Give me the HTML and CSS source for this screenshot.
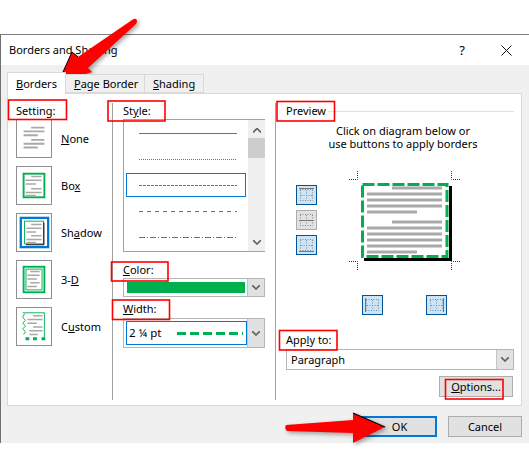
FILE: index.html
```html
<!DOCTYPE html>
<html lang="en">
<head>
<meta charset="utf-8">
<title>Borders and Shading</title>
<link rel="stylesheet" href="styles.css">
</head>
<body>
<svg class="defs" width="0" height="0" aria-hidden="true">
  <defs>
    <g id="bars">
      <path d="M15 8h14M7 12h22M7 16h15M15 21h14M7 25h22M7 29h15" stroke="#a9a9a9" stroke-width="2" fill="none"/>
    </g>
    <g id="grid">
      <path d="M4 4.500h13M4 15.500h13M4.500 5v10M16.500 5v10M10.500 5v10M5 10.500h11" stroke="#8a8a8a" stroke-width="1" stroke-dasharray="1 1.500" fill="none"/>
    </g>
    <polyline id="chev" points="0,0 4,4 8,0" fill="none" stroke="#606060" stroke-width="1.6"/>
  </defs>
</svg>
<div class="dialog">
  <header class="titlebar">
    <span class="title">Borders and Shading</span>
    <span class="help">?</span>
    <svg class="close" width="11" height="11" viewBox="0 0 11 11"><path d="M0.500 0.500l10 10M10.500 0.500l-10 10" stroke="#111" stroke-width="1" fill="none"/></svg>
  </header>
  <div class="content">
    <nav class="tabs">
      <span class="tab active"><u>B</u>orders</span>
      <span class="tab"><u>P</u>age Border</span>
      <span class="tab"><u>S</u>hading</span>
    </nav>
    <section class="panel">
      <div class="col settings">
        <div class="legend">Setting:</div>
        <ul class="setting-list">
          <li class="setting">
            <svg class="setting-icon" width="36" height="39" viewBox="0 0 36 39"><use href="#bars"/></svg>
            <span><u>N</u>one</span>
          </li>
          <li class="setting">
            <svg class="setting-icon" width="36" height="39" viewBox="0 0 36 39"><rect x="7" y="7" width="22" height="25" fill="none" stroke="#00b050" stroke-width="2"/><path d="M15 10h11M9 14h17M9 18h11M15 23h11M9 27h17M9 30h11" stroke="#a9a9a9" stroke-width="1.6"/></svg>
            <span>Bo<u>x</u></span>
          </li>
          <li class="setting">
            <svg class="setting-icon" width="36" height="39" viewBox="0 0 36 39"><rect x="4" y="4" width="29" height="31" fill="none" stroke="#0078d7" stroke-width="2.4"/><rect x="8" y="7.500" width="20" height="24" fill="none" stroke="#00b050" stroke-width="1"/><path d="M28.500 9v23.500H9.500" fill="none" stroke="#000" stroke-width="1"/><path d="M15 11h11M10 15h16M10 19h10M15 23h11M10 27h16M10 30h10" stroke="#a9a9a9" stroke-width="1.6"/></svg>
            <span>Sh<u>a</u>dow</span>
          </li>
          <li class="setting">
            <svg class="setting-icon" width="36" height="39" viewBox="0 0 36 39"><rect x="7" y="6" width="22" height="27" fill="none" stroke="#00b050" stroke-width="2"/><rect x="9.500" y="8.500" width="17" height="22" fill="none" stroke="#00b050" stroke-width="1"/><path d="M14 11h10M11 15h13M11 19h10M14 23h10M11 27h10" stroke="#a9a9a9" stroke-width="1.6"/></svg>
            <span>3-<u>D</u></span>
          </li>
          <li class="setting">
            <svg class="setting-icon" width="36" height="39" viewBox="0 0 36 39"><path d="M6 5h23v26M8 6l-2 4 3 3-3 3 3 3-3 3 3 3-2 3" fill="none" stroke="#00b050" stroke-width="1"/><path d="M9 31h4v3H9zM17 31h4v3h-4zM26 31h4v3h-4z" fill="#00b050"/><path d="M17 8h10M11 12h16M11 16h10M17 20h10M13 24h14M13 28h9" stroke="#a9a9a9" stroke-width="1.6"/></svg>
            <span>C<u>u</u>stom</span>
          </li>
        </ul>
      </div>
      <div class="col styles">
        <div class="legend"><span>St<u>y</u>le:</span></div>
        <div class="listbox">
          <div class="options">
            <div class="option"><i class="ln solid"></i></div>
            <div class="option"><i class="ln dotted"></i></div>
            <div class="option selected"><i class="ln dash-s"></i></div>
            <div class="option"><i class="ln dash-l"></i></div>
            <div class="option"><i class="ln dash-dot"></i></div>
          </div>
          <div class="scrollbar">
            <svg width="8" height="5" viewBox="0 0 8 5"><use href="#chev" transform="translate(0 4.500) scale(1 -1)"/></svg>
            <div class="thumb"></div>
            <svg class="chev-down" width="8" height="5" viewBox="0 0 8 5"><use href="#chev"/></svg>
          </div>
        </div>
        <label class="field-label"><u>C</u>olor:</label>
        <div class="combo color-combo">
          <div class="swatch"></div>
          <div class="combo-btn"><svg width="8" height="5" viewBox="0 0 8 5"><use href="#chev"/></svg></div>
        </div>
        <label class="field-label width-label"><u>W</u>idth:</label>
        <div class="combo width-combo">
          <div class="width-value"><span>2 ¼ pt</span><i class="thick"></i></div>
          <div class="combo-btn"><svg width="8" height="5" viewBox="0 0 8 5"><use href="#chev"/></svg></div>
        </div>
      </div>
      <div class="col preview">
        <div class="legend preview-legend"><span>Preview</span><i class="rule"></i></div>
        <p class="hint">Click on diagram below or<br>use buttons to apply borders</p>
        <div class="stage">
          <div class="side-buttons">
            <svg class="bbtn" width="21" height="20" viewBox="0 0 21 20"><rect x="0.500" y="0.500" width="20" height="19" fill="#cce4f7" stroke="#005499"/><use href="#grid"/><path d="M3 3.500h15" stroke="#777"/></svg>
            <svg class="bbtn" width="21" height="20" viewBox="0 0 21 20"><rect x="0.500" y="0.500" width="20" height="19" fill="#e1e1e1" stroke="#adadad"/><use href="#grid"/><path d="M3 10.500h15" stroke="#777"/></svg>
            <svg class="bbtn" width="21" height="20" viewBox="0 0 21 20"><rect x="0.500" y="0.500" width="20" height="19" fill="#cce4f7" stroke="#005499"/><use href="#grid"/><path d="M3 16.500h15" stroke="#777"/></svg>
          </div>
          <svg class="diagram" width="111" height="100" viewBox="0 0 111 100">
            <path d="M8.500 1v8.500H0M102.500 1v8.500H111M0 91.500h8.500V100M111 91.500h-8.500V100" fill="none" stroke="#333" stroke-dasharray="1 1"/>
            <path d="M15 89.500h86.500V16" fill="none" stroke="#000" stroke-width="3"/>
            <rect x="12" y="13" width="87" height="75" fill="#fff"/>
            <path d="M43 18h50M18 24h75M18 30h75M18 36h75M18 42h50M43 52h50M18 58h75M18 64h75M18 70h75M18 76h75M18 82h50" stroke="#a9a9a9" stroke-width="3"/>
            <rect x="13.500" y="14.500" width="84.500" height="72" fill="none" stroke="#00b050" stroke-width="3" stroke-dasharray="12 3"/>
          </svg>
        </div>
        <div class="bottom-buttons">
          <svg class="bbtn" width="21" height="20" viewBox="0 0 21 20"><rect x="0.500" y="0.500" width="20" height="19" fill="#cce4f7" stroke="#005499"/><use href="#grid"/><path d="M3.500 3v14" stroke="#777"/></svg>
          <svg class="bbtn" width="21" height="20" viewBox="0 0 21 20"><rect x="0.500" y="0.500" width="20" height="19" fill="#cce4f7" stroke="#005499"/><use href="#grid"/><path d="M17.500 3v14" stroke="#777"/></svg>
        </div>
        <label class="field-label apply-label">App<u>l</u>y to:</label>
        <div class="combo apply-combo">
          <div class="apply-value">Paragraph</div>
          <div class="combo-btn"><svg width="8" height="5" viewBox="0 0 8 5"><use href="#chev"/></svg></div>
        </div>
        <div class="options-row"><button class="btn options-btn" type="button"><u>O</u>ptions...</button></div>
      </div>
    </section>
    <footer class="footer">
      <button class="btn ok" type="button">OK</button>
      <button class="btn" type="button">Cancel</button>
    </footer>
  </div>
</div>
<svg class="annotations" width="529" height="455" viewBox="0 0 529 455" aria-hidden="true">
  <g fill="none" stroke="#f00" stroke-width="1.600">
    <rect x="8.500" y="100" width="58" height="19.500"/>
    <rect x="108" y="101" width="57" height="20"/>
    <rect x="111.500" y="262" width="56.500" height="19"/>
    <rect x="112.500" y="300" width="57" height="19.500"/>
    <rect x="277" y="101.500" width="57.500" height="19.500"/>
    <rect x="279.500" y="330.500" width="57.500" height="19.500"/>
    <rect x="445.500" y="379.500" width="57.500" height="19.500"/>
  </g>
  <g class="arrow">
    <path d="M136 19q2 2 0 5L88 68 92 72 58 83 72 52 78 57 132 20q3-2 4-1z" fill="#f00"/>
    <path d="M72 52 58 83M78 57 72 52" stroke="#000" stroke-width="1" fill="none"/>
  </g>
  <g class="arrow">
    <path d="M286 425 353 420 353 413 385 427 353 443 353 433 287 431q-3-3-1-6z" fill="#f00"/>
    <path d="M353 413 385 427" stroke="#000" stroke-width="1.200" fill="none"/>
  </g>
</svg>
</body>
</html>
```
FILE: styles.css
```css
* { box-sizing: border-box; }
html, body { margin: 0; padding: 0; background: #fff; }
body {
  width: 529px;
  height: 455px;
  overflow: hidden;
  position: relative;
  padding-top: 34px;
  font-family: "Noto Sans", "Open Sans", sans-serif;
  font-size: 11px;
  line-height: 16px;
  color: #000;
}
.defs { position: absolute; }
.dialog {
  height: 409px;
  border-top: 1px solid #7f7f7f;
  border-left: 1px solid #6f6f6f;
  display: flex;
  flex-direction: column;
}
.titlebar {
  height: 30px;
  flex: none;
  display: flex;
  align-items: center;
  padding: 0 17px 0 8px;
  background: #fff;
}
.title { flex: 1; }
.help { margin-right: 36px; font-size: 13px; }
.close { display: block; }
.content {
  flex: 1;
  background: #f0f0f0;
  padding: 7px 7px 0 6px;
  display: flex;
  flex-direction: column;
}
.tabs { display: flex; height: 21px; align-items: flex-end; position: relative; z-index: 1; }
.tab {
  height: 19px;
  border: 1px solid #d9d9d9;
  border-left-width: 0;
  background: #f0f0f0;
  padding: 0 8px;
  display: flex;
  align-items: center;
  white-space: pre;
}
.tab.active {
  height: 22px;
  width: 59px;
  margin-bottom: -1px;
  padding-left: 8px;
  background: #fff;
  border-left-width: 1px;
  border-bottom: 0;
}
.tab:nth-child(2) { width: 79px; padding-left: 8px; }
.tab:nth-child(3) { width: 59px; padding-left: 8px; }
.panel {
  height: 313px;
  flex: none;
  border: 1px solid #d9d9d9;
  background: #fff;
  display: grid;
  grid-template-columns: 105px 163px 1fr;
  padding-top: 9px;
}
.col { height: 297px; }
.settings, .styles { border-right: 1px solid #a0a0a0; }
.settings { padding-left: 8px; }
.legend { height: 16px; }
.setting-list {
  list-style: none;
  margin: 0;
  padding: 0;
}
.setting {
  height: 39px;
  margin-bottom: 8px;
  display: flex;
  align-items: center;
  gap: 9px;
}
.setting-icon {
  width: 36px;
  height: 39px;
  display: block;
  flex: none;
  background: #fff;
  border: 1px solid #8f8f8f;
}
.styles { padding-left: 10px; }
.listbox {
  width: 142px;
  height: 133px;
  border: 1px solid #a0a0a0;
  border-right: 0;
  display: flex;
}
.options { width: 124px; flex: none; padding-left: 2px; }
.option {
  height: 26px;
  display: flex;
  align-items: center;
  padding-left: 13px;
  width: 120px;
}
.option.selected {
  height: 24px;
  margin: 1px 0;
  padding-left: 12px;
  border: 1px solid #0078d7;
}
.ln { display: block; width: 98px; height: 1px; }
.solid { background: #00b050; }
.dotted { background: repeating-linear-gradient(90deg, #00b050 0 1px, transparent 1px 2px); }
.dash-s { background: repeating-linear-gradient(90deg, #00b050 0 3px, transparent 3px 4px); }
.dash-l { background: repeating-linear-gradient(90deg, #00b050 0 4px, transparent 4px 8px); }
.dash-dot { background: repeating-linear-gradient(90deg, #00b050 0 6px, transparent 6px 8px, #00b050 8px 9px, transparent 9px 11px); }
.scrollbar {
  width: 17px;
  background: #f0f0f0;
  display: flex;
  flex-direction: column;
  align-items: center;
  padding-top: 8px;
}
.scrollbar svg { display: block; flex: none; }
.thumb { width: 100%; height: 20px; margin-top: 5px; background: #cdcdcd; }
.chev-down { margin-top: auto; margin-bottom: 6px; }
.field-label { display: block; height: 16px; margin-top: 10px; }
.width-label { margin-top: 4px; }
.combo {
  display: flex;
  border: 1px solid #b5b5b5;
  background: #fff;
  width: 142px;
}
.color-combo { height: 19px; padding: 0 0 0 3px; align-items: stretch; }
.swatch { width: 119px; margin: 3px 2px 3px 0; background: #00b050; }
.combo-btn {
  width: 17px;
  margin-left: auto;
  background: #e1e1e1;
  border-left: 1px solid #c5c5c5;
  display: flex;
  align-items: center;
  justify-content: center;
  flex: none;
}
.combo-btn svg { display: block; }
.width-combo { height: 30px; margin-top: 1px; padding: 2px 0 2px 2px; }
.width-value {
  width: 121px;
  border: 1px dotted #000;
  outline: 1px solid #0078d7;
  outline-offset: -1px;
  display: flex;
  align-items: center;
  padding-left: 2px;
}
.width-value span { flex: none; width: 48px; font-size: 11.500px; }
.thick {
  display: block;
  width: 66px;
  height: 3px;
  background: repeating-linear-gradient(90deg, #00b050 0 9px, transparent 9px 13px);
}
.width-combo .combo-btn { margin: -2px 0 -2px auto; }
.preview { padding-left: 10px; }
.preview-legend { display: flex; align-items: center; gap: 2px; width: 228px; }
.rule { flex: 1; height: 1px; background: #e0e0e0; }
.hint { margin: 5px 0 0; width: 234px; text-align: center; line-height: 13px; }
.stage { display: flex; margin-top: 20px; padding-left: 10px; }
.side-buttons { display: flex; flex-direction: column; gap: 5px; margin-top: 15px; margin-right: 32px; }
.bbtn { display: block; flex: none; }
.diagram { display: block; flex: none; }
.bottom-buttons { display: flex; gap: 43px; margin-top: 25px; padding-left: 76px; }
.apply-label { margin-top: 17px; }
.apply-combo { width: 228px; height: 21px; margin-top: 1px; align-items: stretch; }
.apply-value { padding: 2px 0 0 4px; }
.options-row { display: flex; justify-content: flex-end; width: 227px; margin-top: 6px; }
.btn {
  width: 74px;
  height: 21px;
  padding: 0;
  font: inherit;
  color: #000;
  background: #e1e1e1;
  border: 1px solid #adadad;
}
.footer {
  display: flex;
  justify-content: flex-end;
  gap: 11px;
  padding-top: 10px;
}
.ok { border: 2px solid #0078d7; width: 75px; }
.annotations { position: absolute; left: 0; top: 0; }
.arrow { filter: drop-shadow(2px 2px 2px rgba(0, 0, 0, 0.35)); }
```
